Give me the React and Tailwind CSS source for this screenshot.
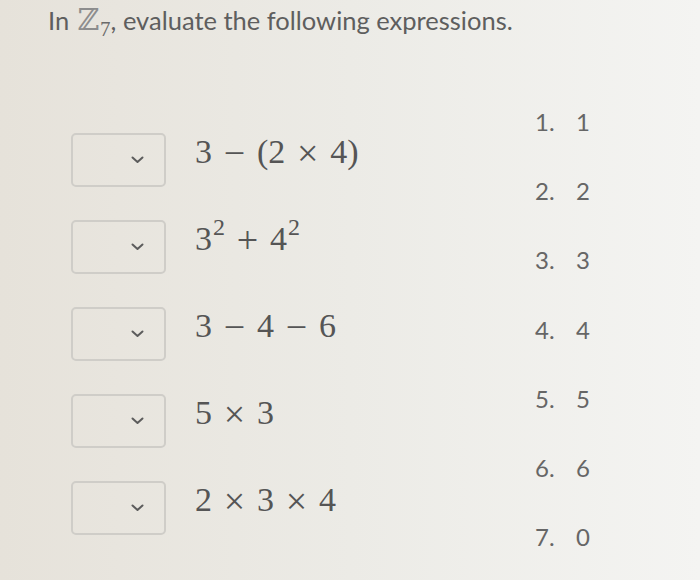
import React from "react";

const Chevron = () => (
  <svg width="13" height="8" viewBox="0 0 13 8" fill="none">
    <path d="M1.5 1.5 L6.5 6 L11.5 1.5" stroke="#5c5c5c" strokeWidth="2" strokeLinecap="round" strokeLinejoin="round" />
  </svg>
);

const Op = ({ c }) => (
  <span className="relative top-[3px] inline-block w-[29px] mx-[8px] text-center text-[38px] leading-none">{c}</span>
);

const Sup = ({ c }) => (
  <span className="relative top-[-15px] text-[24px] ml-[1px]">{c}</span>
);

const rows = [
  <>3<Op c="−" />(2<Op c="×" />4)</>,
  <>3<Sup c="2" /><Op c="+" />4<Sup c="2" /></>,
  <>3<Op c="−" />4<Op c="−" />6</>,
  <>5<Op c="×" />3</>,
  <>2<Op c="×" />3<Op c="×" />4</>,
];

const list = [
  ["1.", "1"],
  ["2.", "2"],
  ["3.", "3"],
  ["4.", "4"],
  ["5.", "5"],
  ["6.", "6"],
  ["7.", "0"],
];

export default function App() {
  return (
    <div
      className="w-[700px] h-[580px] overflow-hidden bg-gradient-to-r from-[#e6e2da] via-[#ecebe6] to-[#f4f4f2] text-[#5b5b5b]"
      style={{ fontFamily: "Lato, 'Open Sans', sans-serif" }}
    >
      <div className="pl-[48px] pt-[3px] text-[25.5px] leading-[34px] text-[#5e5e5e] flex items-baseline">
        <span>In</span>
        <span className="ml-[8px] text-[30px] text-[#8d8d8d]" style={{ fontFamily: "'DejaVu Serif', serif" }}>ℤ</span>
        <span className="relative top-[6px] ml-[1px] text-[21px] text-[#6a6a6a]" style={{ fontFamily: "'Liberation Serif', serif" }}>7</span>
        <span>, evaluate the following expressions.</span>
      </div>

      <div className="flex">
        <div className="flex flex-col gap-[33px] pl-[71px] pt-[93px]">
          {rows.map((r, i) => (
            <div key={i} className="flex items-center h-[54px]">
              <div className="w-[95px] h-[54px] border-2 border-[#cfcdc8] rounded-[5px] flex items-center justify-end pr-[20px]">
                <Chevron />
              </div>
              <div
                className="relative top-[-6px] ml-[29px] text-[34px] leading-none text-[#555555] -mt-[9px] whitespace-nowrap"
                style={{ fontFamily: "'Liberation Serif', 'DejaVu Serif', serif" }}
              >
                {r}
              </div>
            </div>
          ))}
        </div>

        <div className="ml-auto mr-[110px] pt-[47px] flex flex-col">
          {list.map(([n, v]) => (
            <div key={n} className="flex h-[69.3px] items-center text-[24px] text-[#666666]">
              <span className="w-[41px]">{n}</span>
              <span>{v}</span>
            </div>
          ))}
        </div>
      </div>
    </div>
  );
}
